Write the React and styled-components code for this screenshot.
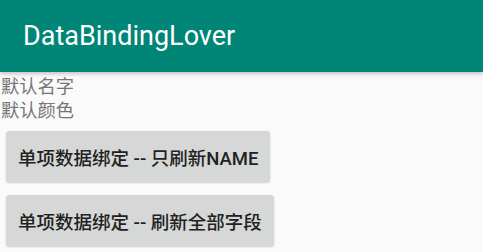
import React from "react";
import styled, { createGlobalStyle } from "styled-components";

const Global = createGlobalStyle`
  html, body { margin: 0; padding: 0; background: #fafafa; }
  body { font-family: Roboto, "Noto Sans CJK SC", sans-serif; }
`;

const Page = styled.div`
  width: 483px;
  height: 252px;
  overflow: hidden;
  background: #fafafa;
  display: flex;
  flex-direction: column;
`;

const AppBar = styled.header`
  height: 72px;
  flex: none;
  background: #008577;
  display: flex;
  align-items: center;
  padding-left: 23px;
  box-shadow: 0 2px 4px rgba(0, 0, 0, 0.22);
  position: relative;
  z-index: 1;
`;

const Title = styled.h1`
  margin: 0;
  font-family: Roboto, sans-serif;
  font-weight: 400;
  font-size: 27px;
  color: #ffffff;
`;

const Content = styled.main`
  display: flex;
  flex-direction: column;
  align-items: flex-start;
  padding-top: 3px;
`;

const Label = styled.div`
  font-family: Roboto, "Noto Sans CJK SC", sans-serif;
  font-size: 18.3px;
  line-height: 24px;
  color: #767676;
  padding-left: 1px;
`;

const Buttons = styled.div`
  display: flex;
  flex-direction: column;
  align-items: flex-start;
  gap: 13px;
  padding: 8px 0 0 6px;
`;

const Button = styled.button`
  height: 51px;
  padding: 0 12px;
  border: none;
  border-radius: 3px;
  background: #d6d7d7;
  color: #222222;
  font-family: Roboto, "Noto Sans CJK SC", sans-serif;
  font-weight: 500;
  font-size: 18.5px;
  box-shadow: 0 1px 2px rgba(0, 0, 0, 0.18);
  cursor: pointer;
`;

export default function App() {
  return (
    <>
      <Global />
      <Page>
        <AppBar>
          <Title>DataBindingLover</Title>
        </AppBar>
        <Content>
          <Label>默认名字</Label>
          <Label>默认颜色</Label>
          <Buttons>
            <Button>单项数据绑定 -- 只刷新NAME</Button>
            <Button>单项数据绑定 -- 刷新全部字段</Button>
          </Buttons>
        </Content>
      </Page>
    </>
  );
}
